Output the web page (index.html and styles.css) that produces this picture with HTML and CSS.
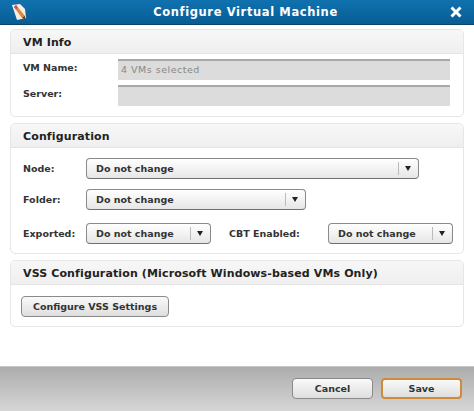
FILE: index.html
```html
<!DOCTYPE html>
<html lang="en">
<head>
  <meta charset="UTF-8" />
  <title>Configure Virtual Machine</title>
  <link rel="stylesheet" href="styles.css">
</head>
<body>
  <div class="dialog">
    <header class="titlebar">
      <svg class="title-icon" width="20" height="20" viewBox="0 0 20 20">
        <path d="M3 3 L11 2 L16 7 L17 16 L8 18 Z" fill="#f3efe6"/>
        <path d="M5 5 L7 3 L16 14 L16 17 L13 16 Z" fill="#d98a3c"/>
        <path d="M5 5 L7 3 L9 5.5 L7 7.5 Z" fill="#c8505a"/>
        <path d="M13 16 L16 14 L16 17 Z" fill="#4a3a2a"/>
      </svg>
      <h1>Configure Virtual Machine</h1>
      <svg class="close-icon" width="12" height="12" viewBox="0 0 12 12">
        <path d="M1.5 1.5 L10.5 10.5 M10.5 1.5 L1.5 10.5" stroke="#fff" stroke-width="3"/>
      </svg>
    </header>

    <main class="content">
      <section class="panel panel-info">
        <h2>VM Info</h2>
        <div class="panel-body info-body">
          <label>VM Name:</label>
          <div class="field">4 VMs selected</div>
          <label>Server:</label>
          <div class="field"></div>
        </div>
      </section>

      <section class="panel panel-config">
        <h2>Configuration</h2>
        <div class="panel-body config-body">
          <div class="row">
            <label class="row-label">Node:</label>
            <div class="select select-node"><span>Do not change</span><i class="arrow"></i></div>
          </div>
          <div class="row">
            <label class="row-label">Folder:</label>
            <div class="select select-folder"><span>Do not change</span><i class="arrow"></i></div>
          </div>
          <div class="row row-split">
            <label class="row-label">Exported:</label>
            <div class="select select-small"><span>Do not change</span><i class="arrow"></i></div>
            <label class="cbt-label">CBT Enabled:</label>
            <div class="select select-small"><span>Do not change</span><i class="arrow"></i></div>
          </div>
        </div>
      </section>

      <section class="panel panel-vss">
        <h2>VSS Configuration (Microsoft Windows-based VMs Only)</h2>
        <div class="panel-body vss-body">
          <button class="btn btn-vss">Configure VSS Settings</button>
        </div>
      </section>
    </main>

    <footer class="footer">
      <button class="btn btn-footer">Cancel</button>
      <button class="btn btn-footer btn-save">Save</button>
    </footer>
  </div>
</body>
</html>
```

FILE: styles.css
```css
* {
  box-sizing: border-box;
}
html, body {
  margin: 0;
  padding: 0;
}
body {
  width: 474px;
  height: 411px;
  overflow: hidden;
  background: #fff;
  font-family: "DejaVu Sans", sans-serif;
  color: #222;
}
.dialog {
  display: flex;
  flex-direction: column;
  height: 411px;
}
.titlebar {
  display: flex;
  align-items: center;
  height: 25px;
  padding: 0 12px 0 9px;
  background: linear-gradient(#0f72ae, #0a5c94);
  border-bottom: 1px solid #0b4468;
}
.title-icon {
  flex: none;
}
.titlebar h1 {
  flex: 1;
  margin: 0;
  padding-left: 12px;
  text-align: center;
  font-size: 11.5px;
  font-weight: bold;
  letter-spacing: 0.62px;
  color: #fff;
}
.close-icon {
  flex: none;
}
.content {
  flex: 1;
  padding: 4px 10px 0 10px;
}
.panel {
  border: 1px solid #e6e6e6;
  border-radius: 5px;
  margin-bottom: 6px;
  background: #fff;
}
.panel h2 {
  margin: 0;
  height: 24px;
  padding: 1px 12px 0;
  line-height: 24px;
  font-size: 11px;
  font-weight: bold;
  letter-spacing: 0.13px;
  color: #222;
  background: linear-gradient(#f7f7f7, #efefef);
  border-bottom: 1px solid #e4e4e4;
  border-radius: 5px 5px 0 0;
}
label {
  font-size: 9.5px;
  font-weight: bold;
  color: #333;
}
.info-body {
  display: grid;
  grid-template-columns: 95px 332px;
  grid-auto-rows: 21px;
  row-gap: 5px;
  align-items: start;
  padding: 5px 0 10px 12px;
}
.info-body label {
  line-height: 17px;
}
.field {
  height: 21px;
  padding: 0 3px;
  line-height: 17px;
  font-size: 9.5px;
  letter-spacing: 0.5px;
  color: #888;
  background: #dcdcdc;
  border-top: 2px solid #a8a8a8;
}
.config-body {
  padding: 10px 10px 9px 12px;
}
.row {
  display: flex;
  align-items: center;
  height: 21px;
  margin-bottom: 10px;
}
.row-split {
  margin: 13px 0 0 0;
}
.row-label {
  width: 63px;
  flex: none;
}
.cbt-label {
  width: 99px;
  margin-left: 18px;
  flex: none;
}
.select {
  display: flex;
  align-items: center;
  justify-content: space-between;
  height: 21px;
  padding: 0 4px 0 9px;
  font-size: 9.5px;
  font-weight: bold;
  color: #333;
  background: linear-gradient(#fff, #e6e6e6);
  border: 1px solid #8a8a8a;
  border-bottom-color: #707070;
  border-radius: 4px;
}
.select-node {
  width: 333px;
}
.select-folder {
  width: 220px;
}
.select-small {
  width: 125px;
  flex: none;
}
.arrow {
  position: relative;
  width: 16px;
  height: 13px;
  border-left: 1px solid #bbb;
}
.arrow::after {
  content: "";
  position: absolute;
  left: 6px;
  top: 4px;
  border-left: 3.5px solid transparent;
  border-right: 3.5px solid transparent;
  border-top: 5px solid #222;
}
.vss-body {
  padding: 11px 0 9px 10px;
}
.btn {
  font-family: "DejaVu Sans", sans-serif;
  font-size: 9.5px;
  font-weight: bold;
  color: #333;
  height: 21px;
  padding: 0;
  background: linear-gradient(#fafafa, #dedede);
  border: 1px solid #8a8a8a;
  border-radius: 4px;
}
.btn-vss {
  width: 148px;
  display: block;
}
.footer {
  display: flex;
  justify-content: flex-end;
  gap: 8px;
  height: 45px;
  padding: 11px 12px 0 0;
  background: linear-gradient(#acacac, #d6d6d6);
  border-top: 1px solid #c8c8c8;
}
.btn-footer {
  width: 81px;
}
.btn-save {
  border: 2px solid #cf8a3a;
}
```
